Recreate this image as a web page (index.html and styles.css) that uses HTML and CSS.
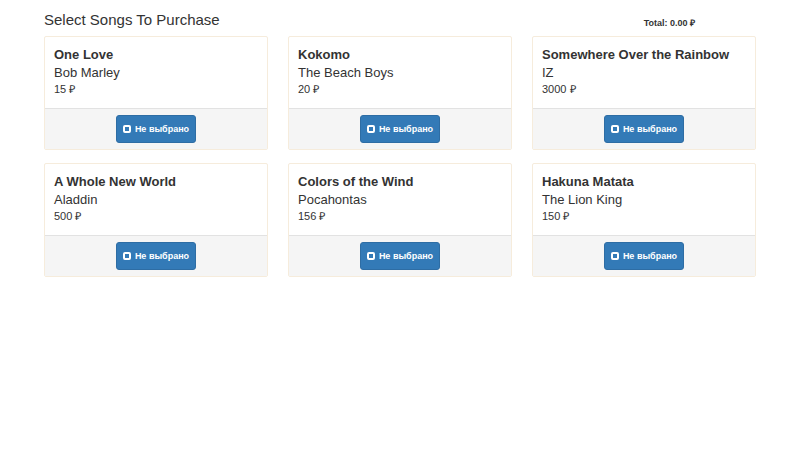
FILE: index.html
```
<!DOCTYPE html>
<html lang="en">
<head>
    <meta charset="UTF-8">
    <title>Select Songs</title>
    <link rel="stylesheet" href="styles.css">
</head>
<body>
    <div class="page">
        <div class="header">
            <h1>Select Songs To Purchase</h1>
            <div class="total">Total: 0.00 ₽</div>
        </div>

        <div class="songs">
            <div class="panel">
                <div class="panel-body">
                    <div class="song-title">One Love</div>
                    <div class="song-artist">Bob Marley</div>
                    <div class="song-price">15 ₽</div>
                </div>
                <div class="panel-footer">
                    <button class="select-button"><span class="check"></span>Не выбрано</button>
                </div>
            </div>
            <div class="panel">
                <div class="panel-body">
                    <div class="song-title">Kokomo</div>
                    <div class="song-artist">The Beach Boys</div>
                    <div class="song-price">20 ₽</div>
                </div>
                <div class="panel-footer">
                    <button class="select-button"><span class="check"></span>Не выбрано</button>
                </div>
            </div>
            <div class="panel">
                <div class="panel-body">
                    <div class="song-title">Somewhere Over the Rainbow</div>
                    <div class="song-artist">IZ</div>
                    <div class="song-price">3000 ₽</div>
                </div>
                <div class="panel-footer">
                    <button class="select-button"><span class="check"></span>Не выбрано</button>
                </div>
            </div>
            <div class="panel">
                <div class="panel-body">
                    <div class="song-title">A Whole New World</div>
                    <div class="song-artist">Aladdin</div>
                    <div class="song-price">500 ₽</div>
                </div>
                <div class="panel-footer">
                    <button class="select-button"><span class="check"></span>Не выбрано</button>
                </div>
            </div>
            <div class="panel">
                <div class="panel-body">
                    <div class="song-title">Colors of the Wind</div>
                    <div class="song-artist">Pocahontas</div>
                    <div class="song-price">156 ₽</div>
                </div>
                <div class="panel-footer">
                    <button class="select-button"><span class="check"></span>Не выбрано</button>
                </div>
            </div>
            <div class="panel">
                <div class="panel-body">
                    <div class="song-title">Hakuna Matata</div>
                    <div class="song-artist">The Lion King</div>
                    <div class="song-price">150 ₽</div>
                </div>
                <div class="panel-footer">
                    <button class="select-button"><span class="check"></span>Не выбрано</button>
                </div>
            </div>
        </div>
    </div>
</body>
</html>
```

FILE: styles.css
```
* {
    box-sizing: border-box;
    margin: 0;
    padding: 0;
}

body {
    font-family: "Liberation Sans", Arial, sans-serif;
    color: #333333;
    background-color: #ffffff;
}

.page {
    width: 712px;
    margin-left: 44px;
    padding-top: 10px;
}

.header {
    display: flex;
    justify-content: space-between;
    align-items: flex-start;
    height: 26px;
}

h1 {
    font-size: 15px;
    font-weight: normal;
    line-height: 20px;
}

.total {
    font-size: 9px;
    font-weight: bold;
    line-height: 12px;
    margin-top: 7px;
    margin-right: 61px;
}

.songs {
    display: grid;
    grid-template-columns: repeat(3, 1fr);
    column-gap: 20px;
    row-gap: 13px;
}

.panel {
    border: 1px solid #f6ecdc;
    border-radius: 2px;
    background-color: #ffffff;
}

.panel-body {
    padding: 9px 9px 11px;
}

.song-title {
    font-size: 13px;
    font-weight: bold;
    line-height: 18px;
}

.song-artist {
    font-size: 13px;
    line-height: 18px;
}

.song-price {
    font-size: 11px;
    line-height: 15px;
}

.panel-footer {
    background-color: #f5f5f5;
    border-top: 1px solid #e2e2e2;
    padding: 6px 0;
    display: flex;
    justify-content: center;
}

.select-button {
    display: flex;
    align-items: center;
    height: 28px;
    width: 80px;
    justify-content: center;
    font-family: "Liberation Sans", Arial, sans-serif;
    font-size: 9px;
    font-weight: bold;
    color: #ffffff;
    background-color: #337ab7;
    border: 1px solid #2e6da4;
    border-radius: 3px;
}

.check {
    width: 8px;
    height: 8px;
    border: 2px solid #ffffff;
    border-radius: 2px;
    margin-right: 4px;
}
```
